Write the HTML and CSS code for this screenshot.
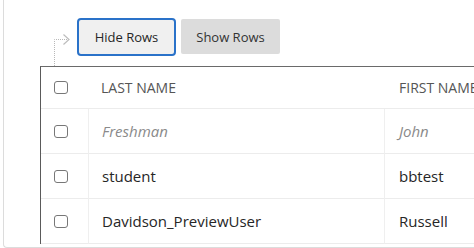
FILE: index.html
```html
<!DOCTYPE html>
<html>
<head>
<meta charset="utf-8">
<link rel="stylesheet" href="styles.css">
</head>
<body>
<div class="frame">
  <div class="toolbar">
    <svg class="connector" width="20" height="33" viewBox="0 0 20 33">
      <path d="M1.5 33 V6.5 H15" fill="none" stroke="#b8b8b8" stroke-width="1" stroke-dasharray="1 1"/>
      <path d="M10.5 1.5 L16 6.5 L10.5 11.5" fill="none" stroke="#bdbdbd" stroke-width="1.2"/>
    </svg>
    <button class="btn btn-focus">Hide Rows</button>
    <button class="btn btn-plain">Show Rows</button>
  </div>
  <div class="grid">
    <div class="cell head check"><span class="box"></span></div>
    <div class="cell head">LAST NAME</div>
    <div class="cell head">FIRST NAME</div>

    <div class="cell check"><span class="box"></span></div>
    <div class="cell col muted">Freshman</div>
    <div class="cell col muted">John</div>

    <div class="cell check"><span class="box"></span></div>
    <div class="cell col">student</div>
    <div class="cell col">bbtest</div>

    <div class="cell check"><span class="box"></span></div>
    <div class="cell col">Davidson_PreviewUser</div>
    <div class="cell col">Russell</div>
  </div>
</div>
</body>
</html>
```
FILE: styles.css
```css
* { box-sizing: border-box; }
html, body { margin: 0; padding: 0; background: #fff; }
body {
  width: 474px;
  height: 248px;
  overflow: hidden;
  font-family: "Open Sans", "Noto Sans", sans-serif;
}
.frame {
  margin-left: 3px;
  height: 248px;
  border-left: 1px solid #dcdcdc;
  border-bottom: 1px solid #dcdcdc;
  border-bottom-left-radius: 4px;
  overflow: hidden;
}
.toolbar {
  display: flex;
  align-items: flex-start;
  padding-top: 18px;
  height: 66px;
}
.connector {
  display: block;
  margin-left: 49px;
  margin-top: 15px;
  margin-right: 4px;
}
.btn {
  font-family: "Open Sans", "Noto Sans", sans-serif;
  font-size: 13px;
  color: #262626;
  width: 99px;
  padding: 0;
  cursor: pointer;
}
.btn-focus {
  height: 38px;
  background: #f0f0f0;
  border: 2px solid #2a72c9;
  border-radius: 4px;
}
.btn-plain {
  height: 35px;
  margin-top: 1px;
  margin-left: 5px;
  background: #dcdcdc;
  border: none;
  border-radius: 2px;
  color: #333;
}
.grid {
  margin-left: 36px;
  width: 500px;
  display: grid;
  grid-template-columns: 47px 296px 1fr;
  border-top: 1px solid #6a6a6a;
  border-left: 1px solid #5a5a5a;
}
.cell {
  height: 45px;
  display: flex;
  align-items: center;
  border-bottom: 1px solid #ececec;
  font-size: 15px;
  color: #262626;
  white-space: nowrap;
  padding-left: 13px;
}
.cell.head {
  height: 42px;
  font-size: 14px;
  color: #555;
}
.cell.col { border-left: 1px solid #efefef; }
.cell.col + .cell.col { padding-left: 14px; }
.cell.head + .cell.head + .cell.head { padding-left: 15px; }
.cell.check { padding-left: 13px; }
.muted { color: #8a8a8a; font-style: italic; }
.box {
  display: block;
  width: 14px;
  height: 13px;
  border: 1.5px solid #777;
  border-radius: 3px;
}
```
